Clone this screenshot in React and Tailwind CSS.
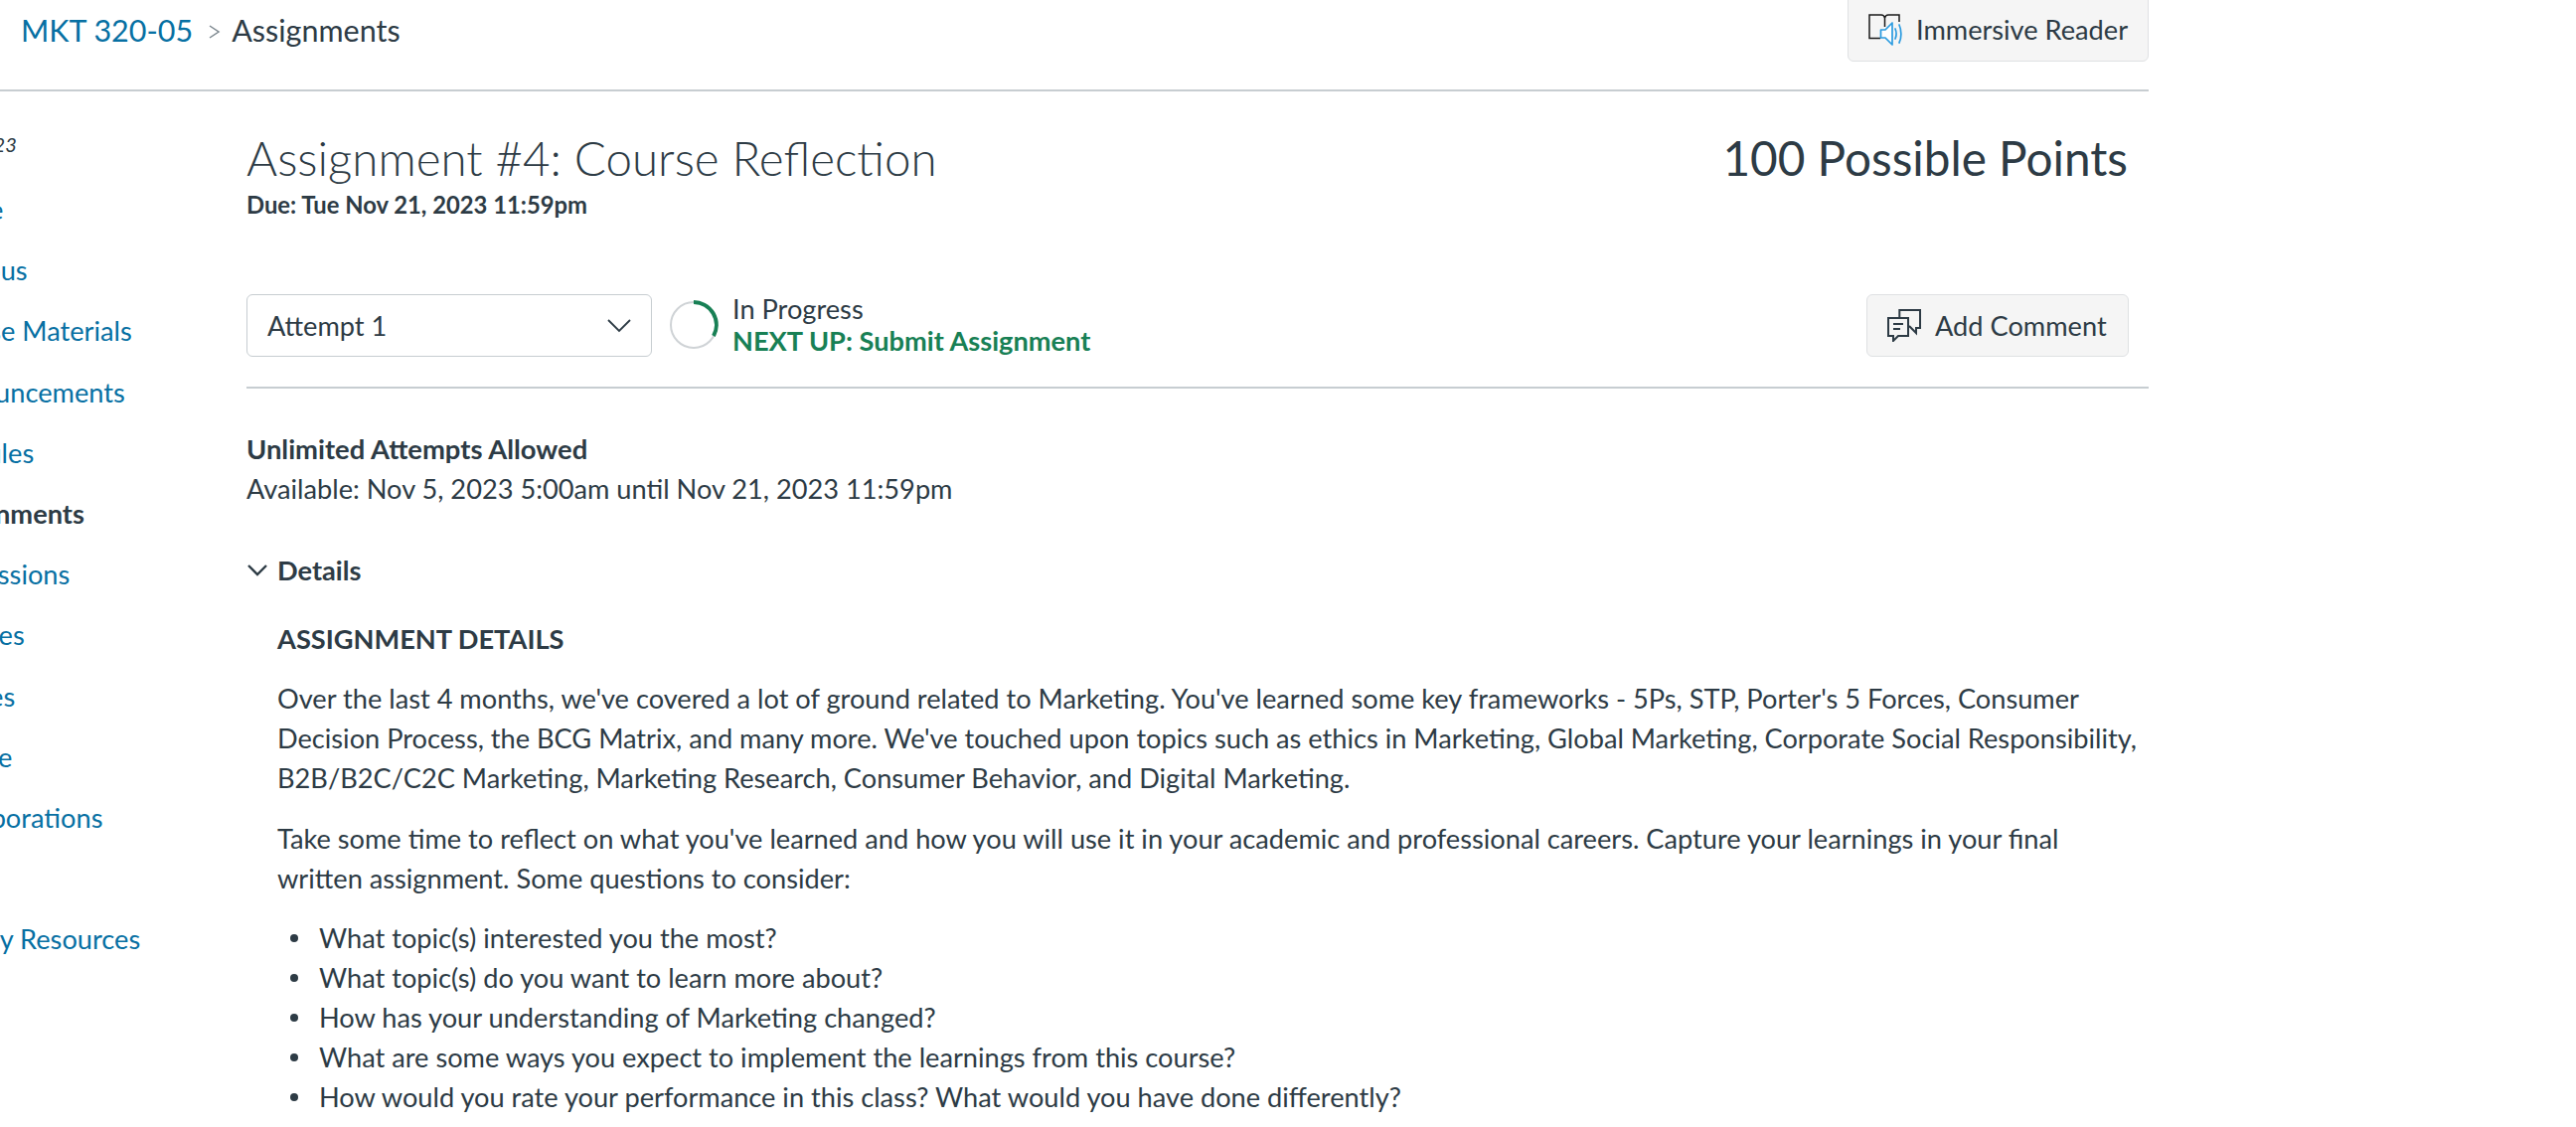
const nav = [
  ["Home"], ["Syllabus"], ["Course Materials"], ["Announcements"], ["Modules"], ["Assignments", true],
  ["Discussions"], ["Quizzes"], ["Grades"], ["People"], ["Collaborations"], ["Chat"], ["Library Resources"],
];

const bullets = [
  "What topic(s) interested you the most?",
  "What topic(s) do you want to learn more about?",
  "How has your understanding of Marketing changed?",
  "What are some ways you expect to implement the learnings from this course?",
  "How would you rate your performance in this class? What would you have done differently?",
];

function ReaderIcon() {
  return (
    <svg width="35" height="32" viewBox="0 0 35 32" fill="none" className="shrink-0">
      <path d="M12 24.5H1V1h12c1.5 0 3 1 3.5 3 .5-2 2-3 3.5-3h11v7M16.5 4v9" stroke="#1a1a1a" strokeWidth="1.5" />
      <path d="M12.5 16H17l7-7v22l-7-7h-4.5z" fill="#fff" stroke="#2b9be0" strokeWidth="1.7" strokeLinejoin="round" />
      <path d="M27 15c1.3 3 1.3 7 0 10M31 11c2.5 5.5 2.5 13 0 18" stroke="#2b9be0" strokeWidth="1.7" strokeLinecap="round" />
    </svg>
  );
}

function CommentIcon() {
  return (
    <svg width="34" height="33" viewBox="0 0 34 33" fill="none" className="shrink-0">
      <path d="M12.3 8V1H33v18h-4v5l-7-7" stroke="#2d3b45" strokeWidth="2" />
      <path d="M1 9h20v18H11l-5 5v-5H1z" fill="#f5f5f5" stroke="#2d3b45" strokeWidth="2" />
      <path d="M6 15h10M6 20h7" stroke="#2d3b45" strokeWidth="2" />
    </svg>
  );
}

export default function App() {
  return (
    <div className="w-[2592px] h-[1134px] overflow-hidden bg-white text-[#2d3b45] font-['Lato','Noto_Sans',sans-serif] text-[27.2px] leading-[40px]">
      <div className="w-[2162px]">
        <header className="h-[92px] border-b-2 border-[#c7cdd1] flex items-start justify-between">
          <nav className="flex items-center pl-[21px] pt-[10px] text-[30.5px] leading-[40px]">
            <span className="text-[#0770a3]">MKT 320-05</span>
            <svg width="14" height="16" viewBox="0 0 14 16" fill="none" className="ml-[15px] mr-[10px] mt-[3px]">
              <path d="M2 2l9 6-9 6" stroke="#7b868d" strokeWidth="1.5" />
            </svg>
            <span>Assignments</span>
          </nav>
          <button className="h-[72px] -mt-[10px] w-[303px] rounded-[6px] border border-[#dfe1e3] bg-[#f5f5f5] flex items-center pl-[20px] gap-[13px] pt-[7px]">
            <ReaderIcon />
            <span>Immersive Reader</span>
          </button>
        </header>
        <div className="flex">
          <aside className="w-[248px] shrink-0 overflow-hidden">
            <div className="-ml-[69px] w-[317px] whitespace-nowrap text-[#0770a3]">
              <div className="italic text-[#2d3b45] text-[20px] leading-[30px] pt-[38px] mb-[31px] ml-[6px]">Fall 2023</div>
              <ul className="flex flex-col gap-[21.2px]">
                {nav.map(([label, active]) => (
                  <li key={label} className={active ? "font-bold text-[#2d3b45]" : ""}>{label}</li>
                ))}
              </ul>
            </div>
          </aside>
          <main className="flex-1 min-w-0">
            <div className="flex justify-between items-start pt-[40px] pr-[21px]">
              <div>
                <h1 className="text-[47.5px] leading-[54px] font-light">Assignment #4: Course Reflection</h1>
                <div className="text-[23.8px] leading-[30px] font-bold mt-[5px]">Due: Tue Nov 21, 2023 11:59pm</div>
              </div>
              <div className="text-[47.7px] leading-[54px]">100 Possible Points</div>
            </div>
            <div className="flex items-start mt-[75px] pb-[30px] border-b-2 border-[#c7cdd1] pr-[20px]">
              <div className="w-[408px] h-[63px] rounded-[6px] border border-[#c7cdd1] flex items-center justify-between pl-[20px] pr-[19px]">
                <span>Attempt 1</span>
                <svg width="26" height="16" viewBox="0 0 26 16" fill="none">
                  <path d="M2 2l11 11L24 2" stroke="#2d3b45" strokeWidth="1.8" />
                </svg>
              </div>
              <svg width="50" height="50" viewBox="0 0 50 50" fill="none" className="ml-[17px] mt-[6px]">
                <circle cx="25" cy="25" r="23" stroke="#cfd3d6" strokeWidth="2" />
                <path d="M25 2a23 23 0 0 1 20 34" stroke="#188055" strokeWidth="4" />
              </svg>
              <div className="ml-[14px] -mt-[1px] leading-[32px]">
                <div>In Progress</div>
                <div className="font-bold text-[#188055]">NEXT UP: Submit Assignment</div>
              </div>
              <button className="ml-auto w-[264px] h-[63px] rounded-[6px] border border-[#dfe1e3] bg-[#f5f5f5] flex items-center pl-[20px] gap-[14px]">
                <CommentIcon />
                <span>Add Comment</span>
              </button>
            </div>
            <div className="pr-[8px]">
              <div className="font-bold mt-[41px] text-[27.4px]">Unlimited Attempts Allowed</div>
              <div>Available: Nov 5, 2023 5:00am until Nov 21, 2023 11:59pm</div>
              <div className="flex items-center mt-[42px] font-bold">
                <svg width="22" height="14" viewBox="0 0 22 14" fill="none" className="mr-[9px]">
                  <path d="M2 2l9 9 9-9" stroke="#2d3b45" strokeWidth="2.4" />
                </svg>
                <span>Details</span>
              </div>
              <div className="pl-[31px]">
                <div className="font-bold mt-[29px]">ASSIGNMENT DETAILS</div>
                <p className="mt-[20px]">Over the last 4 months, we've covered a lot of ground related to Marketing. You've learned some key frameworks - 5Ps, STP, Porter's 5 Forces, Consumer Decision Process, the BCG Matrix, and many more. We've touched upon topics such as ethics in Marketing, Global Marketing, Corporate Social Responsibility, B2B/B2C/C2C Marketing, Marketing Research, Consumer Behavior, and Digital Marketing.</p>
                <p className="mt-[21px]">Take some time to reflect on what you've learned and how you will use it in your academic and professional careers. Capture your learnings in your final written assignment. Some questions to consider:</p>
                <ul className="pl-[13px] mt-[20px]">
                  {bullets.map((b) => (
                    <li key={b} className="flex items-center gap-[21px]">
                      <span className="w-[8px] h-[8px] rounded-full bg-[#2d3b45] shrink-0" />
                      <span>{b}</span>
                    </li>
                  ))}
                </ul>
              </div>
            </div>
          </main>
        </div>
      </div>
    </div>
  );
}
